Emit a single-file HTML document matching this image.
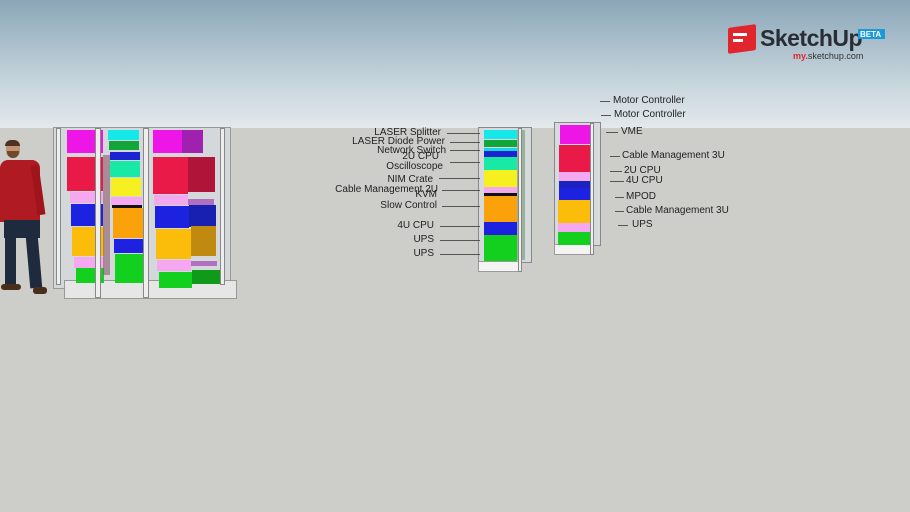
<!DOCTYPE html>
<html><head><meta charset="utf-8"><style>
*{margin:0;padding:0}
body{width:910px;height:512px;overflow:hidden;position:relative;font-family:"Liberation Sans",sans-serif;background:#cdcdca}
.sky{position:absolute;left:0;top:0;width:910px;height:128px;background:linear-gradient(#8aa6b8,#c3d2da 60%,#e3e9ec)}
.b{position:absolute}
.l{position:absolute;font-size:10px;color:#222;white-space:nowrap;line-height:10px}
.r{text-align:right;width:200px}
.ln{position:absolute;height:1px;background:#555}
</style></head><body>
<div class="sky"></div>

<!-- person -->
<div class="b" style="left:6px;top:140px;width:14px;height:18px;background:#c49370;border-radius:6px 6px 7px 7px"></div>
<div class="b" style="left:5px;top:140px;width:15px;height:6px;background:#4a3322;border-radius:6px 6px 0 0"></div>
<div class="b" style="left:7px;top:151px;width:12px;height:7px;background:#6b4a30;border-radius:0 0 6px 6px"></div>
<div class="b" style="left:0;top:160px;width:40px;height:62px;background:#b01a22;border-radius:8px 8px 0 0"></div>
<div class="b" style="left:34px;top:165px;width:8px;height:50px;background:#a0151c;transform:rotate(-8deg)"></div>
<div class="b" style="left:4px;top:220px;width:36px;height:18px;background:#1e2a3e"></div>
<div class="b" style="left:5px;top:236px;width:11px;height:50px;background:#1e2a3e"></div>
<div class="b" style="left:28px;top:236px;width:12px;height:52px;background:#1e2a3e;transform:rotate(-5deg)"></div>
<div class="b" style="left:1px;top:284px;width:20px;height:6px;background:#4a2e1c;border-radius:3px"></div>
<div class="b" style="left:33px;top:287px;width:14px;height:7px;background:#4a2e1c;border-radius:3px"></div>

<!-- left group -->
<div class="b" style="left:53px;top:127px;width:176px;height:160px;border:1px solid #999;background:#d4d8da"></div>
<div class="b" style="left:64px;top:280px;width:171px;height:17px;background:#e6e6e6;border:1px solid #999"></div>
<div class="b" style="left:67px;top:130px;width:36px;height:23px;background:#ee16e6"></div>
<div class="b" style="left:67px;top:157px;width:36px;height:34px;background:#ea1a48"></div>
<div class="b" style="left:70px;top:192px;width:33px;height:11px;background:#f4a8f0"></div>
<div class="b" style="left:71px;top:204px;width:32px;height:22px;background:#1c22e0"></div>
<div class="b" style="left:72px;top:227px;width:32px;height:29px;background:#fbbd0a"></div>
<div class="b" style="left:74px;top:257px;width:30px;height:11px;background:#f4a8f0"></div>
<div class="b" style="left:76px;top:268px;width:28px;height:15px;background:#14d01e"></div>
<div class="b" style="left:103px;top:155px;width:7px;height:120px;background:#8a5a6a;opacity:.6"></div>

<div class="b" style="left:108px;top:130px;width:31px;height:10px;background:#14e8e8"></div>
<div class="b" style="left:109px;top:141px;width:30px;height:9px;background:#12a63a"></div>
<div class="b" style="left:110px;top:152px;width:30px;height:8px;background:#1c22d0"></div>
<div class="b" style="left:110px;top:161px;width:30px;height:16px;background:#18eaa6"></div>
<div class="b" style="left:111px;top:178px;width:30px;height:18px;background:#f6f020"></div>
<div class="b" style="left:111px;top:197px;width:31px;height:8px;background:#f4a8f0"></div>
<div class="b" style="left:112px;top:205px;width:30px;height:3px;background:#111"></div>
<div class="b" style="left:113px;top:208px;width:30px;height:30px;background:#fba20a"></div>
<div class="b" style="left:114px;top:239px;width:30px;height:14px;background:#1c22e0"></div>
<div class="b" style="left:115px;top:254px;width:29px;height:29px;background:#14d01e"></div>

<div class="b" style="left:153px;top:130px;width:29px;height:23px;background:#ee16e6"></div>
<div class="b" style="left:182px;top:130px;width:21px;height:23px;background:#a020b0"></div>
<div class="b" style="left:153px;top:157px;width:35px;height:37px;background:#ea1a48"></div>
<div class="b" style="left:188px;top:157px;width:27px;height:35px;background:#b01438"></div>
<div class="b" style="left:154px;top:195px;width:34px;height:10px;background:#f4a8f0"></div>
<div class="b" style="left:188px;top:199px;width:26px;height:6px;background:#b070c0"></div>
<div class="b" style="left:155px;top:206px;width:34px;height:22px;background:#1c22e0"></div>
<div class="b" style="left:189px;top:205px;width:27px;height:22px;background:#1820b0"></div>
<div class="b" style="left:156px;top:229px;width:35px;height:30px;background:#fbbd0a"></div>
<div class="b" style="left:191px;top:226px;width:25px;height:30px;background:#c08a10"></div>
<div class="b" style="left:157px;top:260px;width:34px;height:11px;background:#f4a8f0"></div>
<div class="b" style="left:191px;top:261px;width:26px;height:5px;background:#b070c0"></div>
<div class="b" style="left:159px;top:272px;width:33px;height:16px;background:#14d01e"></div>
<div class="b" style="left:192px;top:270px;width:32px;height:14px;background:#109a1a"></div>
<div class="b" style="left:95px;top:128px;width:4px;height:168px;background:#eee;border:1px solid #888"></div>
<div class="b" style="left:143px;top:128px;width:4px;height:168px;background:#eee;border:1px solid #888"></div>
<div class="b" style="left:56px;top:128px;width:3px;height:155px;background:#eee;border:1px solid #888"></div>
<div class="b" style="left:220px;top:128px;width:3px;height:155px;background:#eee;border:1px solid #888"></div>

<!-- middle rack -->
<div class="b" style="left:478px;top:127px;width:52px;height:134px;background:#d6dadc;border:1px solid #888"></div>
<div class="b" style="left:478px;top:261px;width:40px;height:9px;background:#f4f4f4;border:1px solid #999"></div>
<div class="b" style="left:484px;top:130px;width:33px;height:9px;background:#14e8e8"></div>
<div class="b" style="left:484px;top:140px;width:33px;height:7px;background:#12a63a"></div>
<div class="b" style="left:484px;top:148px;width:33px;height:3px;background:#14d8e8"></div>
<div class="b" style="left:484px;top:151px;width:33px;height:6px;background:#1c22d0"></div>
<div class="b" style="left:484px;top:157px;width:33px;height:13px;background:#18eaa6"></div>
<div class="b" style="left:484px;top:170px;width:33px;height:17px;background:#f6f020"></div>
<div class="b" style="left:484px;top:187px;width:33px;height:6px;background:#f4a8f0"></div>
<div class="b" style="left:484px;top:193px;width:33px;height:3px;background:#111"></div>
<div class="b" style="left:484px;top:196px;width:33px;height:26px;background:#fba20a"></div>
<div class="b" style="left:484px;top:222px;width:33px;height:13px;background:#1c22e0"></div>
<div class="b" style="left:484px;top:235px;width:33px;height:13px;background:#14d01e"></div>
<div class="b" style="left:484px;top:248px;width:33px;height:13px;background:#14d01e"></div>
<div class="b" style="left:517px;top:130px;width:8px;height:130px;background:#5a8a5a;opacity:.5"></div>
<div class="b" style="left:518px;top:128px;width:2px;height:142px;background:#eee;border:1px solid #888"></div>

<!-- right rack -->
<div class="b" style="left:554px;top:122px;width:45px;height:122px;background:#d6dadc;border:1px solid #888"></div>
<div class="b" style="left:554px;top:244px;width:36px;height:9px;background:#f4f4f4;border:1px solid #999"></div>
<div class="b" style="left:560px;top:125px;width:31px;height:19px;background:#ee16e6"></div>
<div class="b" style="left:559px;top:145px;width:32px;height:27px;background:#ea1a48"></div>
<div class="b" style="left:559px;top:172px;width:32px;height:9px;background:#f4a8f0"></div>
<div class="b" style="left:559px;top:181px;width:32px;height:7px;background:#1c22c0"></div>
<div class="b" style="left:559px;top:188px;width:32px;height:12px;background:#1c22e0"></div>
<div class="b" style="left:558px;top:200px;width:33px;height:23px;background:#fbbd0a"></div>
<div class="b" style="left:558px;top:223px;width:33px;height:9px;background:#f4a8f0"></div>
<div class="b" style="left:558px;top:232px;width:33px;height:13px;background:#14d01e"></div>
<div class="b" style="left:590px;top:123px;width:2px;height:130px;background:#eee;border:1px solid #888"></div>

<!-- middle labels -->
<div class="l r" style="left:241px;top:128px">LASER Splitter</div>
<div class="l r" style="left:245px;top:137px">LASER Diode Power</div>
<div class="l r" style="left:246px;top:146px">Network Switch</div>
<div class="l r" style="left:239px;top:152px">2U CPU</div>
<div class="l r" style="left:243px;top:162px">Oscilloscope</div>
<div class="l r" style="left:233px;top:175px">NIM Crate</div>
<div class="l r" style="left:238px;top:185px">Cable Management 2U</div>
<div class="l r" style="left:237px;top:190px">KVM</div>
<div class="l r" style="left:237px;top:201px">Slow Control</div>
<div class="l r" style="left:234px;top:221px">4U CPU</div>
<div class="l r" style="left:234px;top:235px">UPS</div>
<div class="l r" style="left:234px;top:249px">UPS</div>
<div class="ln" style="left:447px;top:133px;width:33px"></div>
<div class="ln" style="left:450px;top:142px;width:30px"></div>
<div class="ln" style="left:450px;top:150px;width:30px"></div>
<div class="ln" style="left:450px;top:162px;width:30px"></div>
<div class="ln" style="left:439px;top:178px;width:41px"></div>
<div class="ln" style="left:442px;top:190px;width:38px"></div>
<div class="ln" style="left:442px;top:206px;width:38px"></div>
<div class="ln" style="left:440px;top:226px;width:40px"></div>
<div class="ln" style="left:440px;top:240px;width:40px"></div>
<div class="ln" style="left:440px;top:254px;width:40px"></div>

<!-- right labels -->
<div class="l" style="left:613px;top:96px">Motor Controller</div>
<div class="l" style="left:614px;top:110px">Motor Controller</div>
<div class="l" style="left:621px;top:127px">VME</div>
<div class="l" style="left:622px;top:151px">Cable Management 3U</div>
<div class="l" style="left:624px;top:166px">2U CPU</div>
<div class="l" style="left:626px;top:176px">4U CPU</div>
<div class="l" style="left:626px;top:192px">MPOD</div>
<div class="l" style="left:626px;top:206px">Cable Management 3U</div>
<div class="l" style="left:632px;top:220px">UPS</div>
<div class="ln" style="left:600px;top:101px;width:10px"></div>
<div class="ln" style="left:601px;top:115px;width:10px"></div>
<div class="ln" style="left:606px;top:132px;width:12px"></div>
<div class="ln" style="left:610px;top:156px;width:10px"></div>
<div class="ln" style="left:610px;top:171px;width:12px"></div>
<div class="ln" style="left:610px;top:181px;width:14px"></div>
<div class="ln" style="left:615px;top:197px;width:9px"></div>
<div class="ln" style="left:615px;top:211px;width:9px"></div>
<div class="ln" style="left:618px;top:225px;width:10px"></div>

<!-- logo -->
<div class="b" style="left:728px;top:26px;width:28px;height:26px;background:#e0262c;transform:skewY(-8deg);border-radius:2px"></div>
<div class="b" style="left:733px;top:33px;width:14px;height:3px;background:#fff"></div>
<div class="b" style="left:733px;top:39px;width:10px;height:3px;background:#fff"></div>
<div class="l" style="left:760px;top:25px;font-size:23px;line-height:26px;font-weight:bold;color:#2a2d35;letter-spacing:-0.5px">SketchUp</div>
<div class="b" style="left:858px;top:29px;width:27px;height:10px;background:#1a9ad8"></div>
<div class="l" style="left:860px;top:30px;font-size:8px;line-height:9px;color:#fff;font-weight:bold">BETA</div>
<div class="l" style="left:793px;top:51px;font-size:9px;color:#333"><span style="color:#e0262c;font-weight:bold">my.</span>sketchup.com</div>
</body></html>
